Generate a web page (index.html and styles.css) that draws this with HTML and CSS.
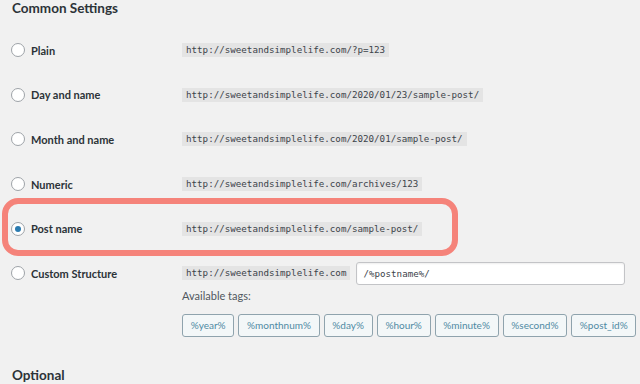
FILE: index.html
```html
<!DOCTYPE html>
<html lang="en">
<head>
  <meta charset="UTF-8" />
  <meta name="viewport" content="width=device-width, initial-scale=1.0"/>
  <title>Permalink Settings</title>
  <link rel="stylesheet" href="styles.css">
</head>

<body>
  <div class="wrap">
    <h2 class="section-title">Common Settings</h2>

    <div class="options">
      <div class="option-row">
        <label class="option-label"><input type="radio" name="structure" /> Plain</label>
        <code class="sample">http://sweetandsimplelife.com/?p=123</code>
      </div>
      <div class="option-row">
        <label class="option-label"><input type="radio" name="structure" /> Day and name</label>
        <code class="sample">http://sweetandsimplelife.com/2020/01/23/sample-post/</code>
      </div>
      <div class="option-row">
        <label class="option-label"><input type="radio" name="structure" /> Month and name</label>
        <code class="sample">http://sweetandsimplelife.com/2020/01/sample-post/</code>
      </div>
      <div class="option-row">
        <label class="option-label"><input type="radio" name="structure" /> Numeric</label>
        <code class="sample">http://sweetandsimplelife.com/archives/123</code>
      </div>
      <div class="option-row highlighted">
        <label class="option-label"><input type="radio" name="structure" checked /> Post name</label>
        <code class="sample">http://sweetandsimplelife.com/sample-post/</code>
      </div>
      <div class="option-row">
        <label class="option-label"><input type="radio" name="structure" /> Custom Structure</label>
        <div class="custom-field">
          <code class="sample">http://sweetandsimplelife.com</code>
          <input type="text" class="custom-input" value="/%postname%/" />
        </div>
      </div>

      <div class="tags-block">
        <p class="tags-title">Available tags:</p>
        <div class="tags">
          <button type="button">%year%</button>
          <button type="button">%monthnum%</button>
          <button type="button">%day%</button>
          <button type="button">%hour%</button>
          <button type="button">%minute%</button>
          <button type="button">%second%</button>
          <button type="button">%post_id%</button>
        </div>
      </div>
    </div>

    <h2 class="section-title optional">Optional</h2>
  </div>
</body>
</html>
```

FILE: styles.css
```css
body {
  margin: 0;
  background-color: #f1f1f1;
  color: #1d2327;
  font-family: 'Lato', 'Open Sans', sans-serif;
}

.wrap {
  padding: 0 12px 0 11px;
}

.section-title {
  margin: 0;
  height: 17px;
  line-height: 17px;
  font-size: 13.5px;
  font-weight: 700;
  color: #2c3338;
  padding-left: 1px;
}

.section-title.optional {
  margin-top: 30px;
}

.options {
  padding-top: 11px;
}

.option-row {
  position: relative;
  display: flex;
  align-items: center;
  height: 44.6px;
}

.option-label {
  display: flex;
  align-items: center;
  gap: 6px;
  width: 171px;
  flex-shrink: 0;
  font-size: 11px;
  font-weight: 700;
  color: #2c3338;
}

.option-label input {
  appearance: none;
  margin: 0;
  width: 14px;
  height: 14px;
  border: 1px solid #9ea3a8;
  border-radius: 50%;
  background: #fff;
  box-sizing: border-box;
  display: grid;
  place-items: center;
}

.option-label input:checked::before {
  content: '';
  width: 6px;
  height: 6px;
  border-radius: 50%;
  background: #2b7bb0;
}

.sample {
  font-family: 'DejaVu Sans Mono', 'Liberation Mono', monospace;
  font-size: 9.2px;
  line-height: 14px;
  padding: 0 4px;
  background: #e4e4e4;
  color: #3c434a;
}

.highlighted::after {
  content: '';
  position: absolute;
  left: -9px;
  top: -8px;
  width: 456px;
  height: 58px;
  border: 6px solid #f5837a;
  border-radius: 16px;
  box-sizing: border-box;
  pointer-events: none;
}

.custom-field {
  display: flex;
  align-items: center;
  gap: 6px;
}

.custom-input {
  width: 269px;
  height: 23px;
  box-sizing: border-box;
  padding: 0 6px;
  border: 1px solid #c3c4c7;
  border-radius: 3px;
  background: #fff;
  font-family: 'DejaVu Sans Mono', 'Liberation Mono', monospace;
  font-size: 9.2px;
  color: #3c434a;
  box-shadow: 0 1px 2px rgba(0, 0, 0, 0.07) inset;
}

.tags-block {
  padding-left: 171px;
}

.tags-title {
  margin: -8px 0 11px;
  line-height: 15px;
  font-size: 11px;
  color: #50575e;
}

.tags {
  display: flex;
  gap: 4px;
}

.tags button {
  height: 23px;
  padding: 0 7.7px;
  border: 1px solid #8fa3ad;
  border-radius: 3px;
  background: #f3f7f8;
  color: #4f8aa3;
  font-family: 'Lato', 'Open Sans', sans-serif;
  font-size: 10px;
}
```
